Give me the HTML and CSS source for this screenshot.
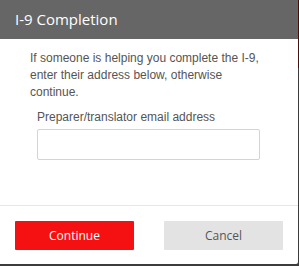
FILE: index.html
```html
<!DOCTYPE html>
<html lang="en">
<head>
<meta charset="UTF-8">
<meta name="viewport" content="width=device-width, initial-scale=1.0">
<title>I-9 Completion</title>
<link rel="stylesheet" href="styles.css">
</head>
<body>
<div class="modal">
    <div class="modal-head">I-9 Completion</div>
    <div class="modal-body">
        <p class="intro">If someone is helping you complete the <span class="nowrap">I-9,</span> enter their address below, otherwise continue.</p>
        <div class="field">
            <label for="email">Preparer/translator email address</label>
            <input type="text" id="email">
        </div>
    </div>
    <div class="modal-foot">
        <button class="btn btn-red">Continue</button>
        <button class="btn btn-grey">Cancel</button>
    </div>
</div>
</body>
</html>
```

FILE: styles.css
```css
html, body {
    margin: 0;
    height: 100%;
}
body {
    background: linear-gradient(to bottom, #4d0b0b 0, #4d0b0b 68px, #3c3c3c 68px);
    overflow: hidden;
}
.modal {
    width: 298px;
    height: 264px;
    background: #fff;
    display: flex;
    flex-direction: column;
    border-bottom-right-radius: 2px;
}
.modal-head {
    height: 39px;
    line-height: 38px;
    background: #666;
    color: #fff;
    padding: 0 15px;
    font-family: "Open Sans", sans-serif;
    font-size: 15px;
    font-weight: 500;
}
.modal-body {
    flex: 1;
    padding: 11px 30px 0;
    font-family: "Liberation Sans", Arial, sans-serif;
    font-size: 12px;
    color: #555;
}
.intro {
    margin: 0;
    line-height: 17px;
}
.nowrap {
    white-space: nowrap;
}
.field {
    margin: 8px 7px 0;
}
.field label {
    display: block;
    line-height: 17px;
    margin-bottom: 3px;
}
.field input {
    display: block;
    box-sizing: border-box;
    width: 223px;
    height: 31px;
    border: 1px solid #d4d4d4;
    border-radius: 2px;
    margin: 0;
}
.modal-foot {
    border-top: 1px solid #e6e6e6;
    padding: 15px 15px 14px;
    display: flex;
    justify-content: space-between;
}
.btn {
    width: 119px;
    height: 29px;
    border: 0;
    border-radius: 1px;
    font-family: "Open Sans", sans-serif;
    font-size: 12px;
    cursor: pointer;
}
.btn-red {
    background: #f51111;
    color: #fff;
}
.btn-grey {
    background: #e3e3e3;
    color: #555;
}
```
